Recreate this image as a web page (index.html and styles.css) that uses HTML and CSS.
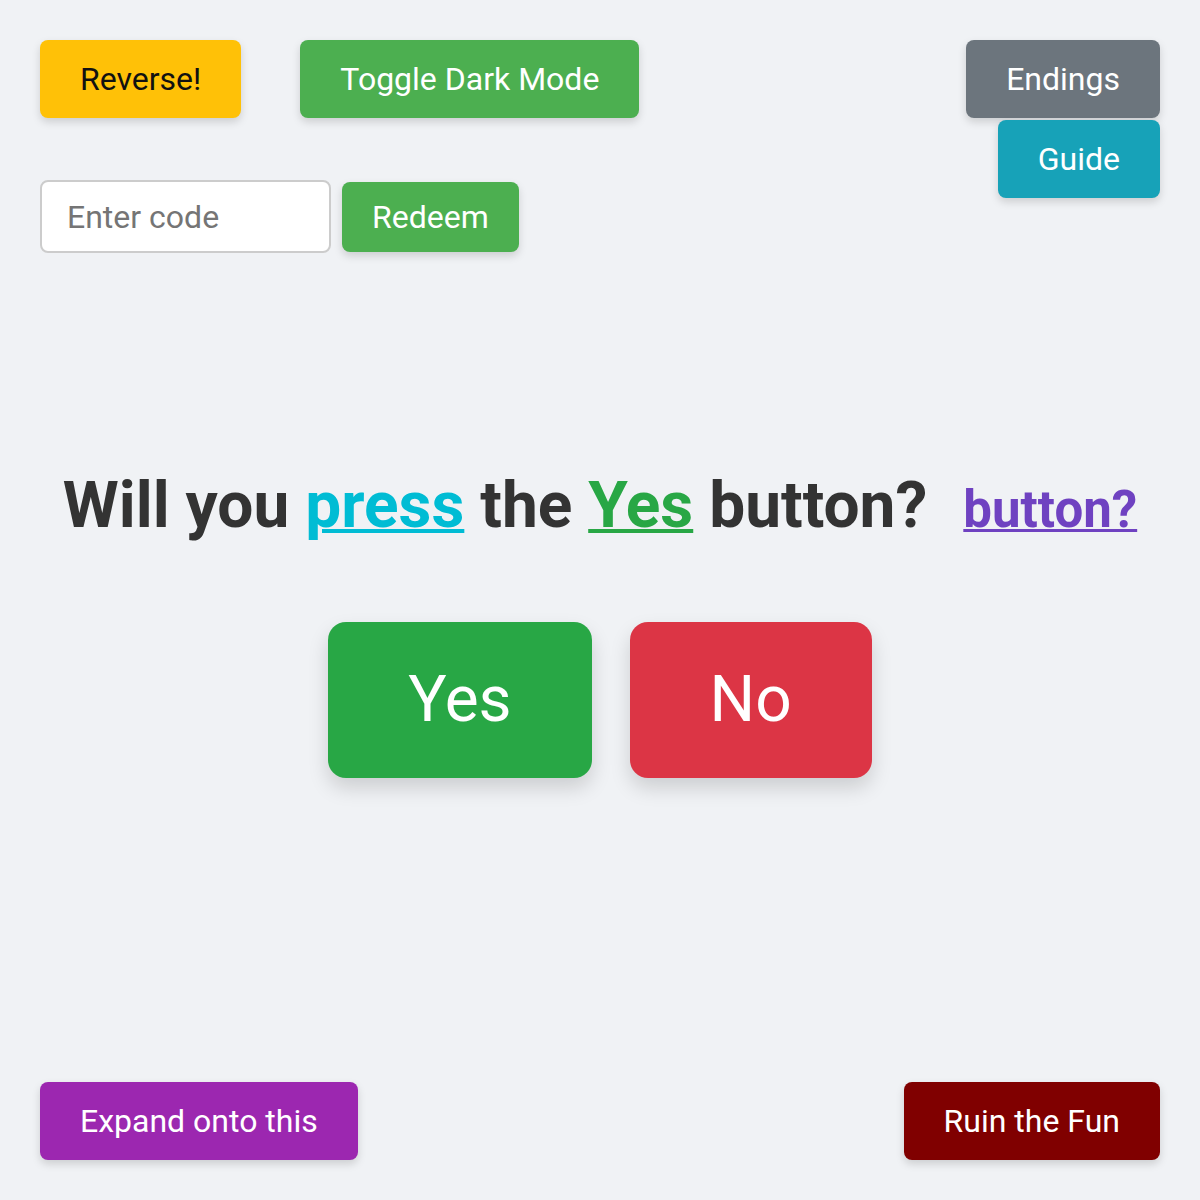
FILE: index.html
```html
<!DOCTYPE html>
<html lang="en">
<head>
  <meta charset="UTF-8">
  <meta name="viewport" content="width=device-width, initial-scale=1.0">
  <title>Will you press the Yes button?</title>
  <link rel="stylesheet" href="styles.css">
</head>
<body>
  <div class="page">
    <!-- Top controls -->
    <div class="top">
      <div class="top-left">
        <div class="row">
          <button class="btn btn-reverse">Reverse!</button>
          <button class="btn btn-dark-mode">Toggle Dark Mode</button>
        </div>
        <div class="code-row">
          <input class="code-input" type="text" placeholder="Enter code">
          <button class="btn btn-redeem">Redeem</button>
        </div>
      </div>
      <div class="top-right">
        <button class="btn btn-endings">Endings</button>
        <button class="btn btn-guide">Guide</button>
      </div>
    </div>

    <!-- Question -->
    <h1 class="question">
      Will you <a class="word-press">press</a> the <a class="word-yes">Yes</a> button?<a class="extra">button?</a>
    </h1>

    <div class="answers">
      <button class="answer answer-yes">Yes</button>
      <button class="answer answer-no">No</button>
    </div>

    <!-- Bottom controls -->
    <div class="bottom">
      <button class="btn btn-expand">Expand onto this</button>
      <button class="btn btn-ruin">Ruin the Fun</button>
    </div>
  </div>
</body>
</html>
```

FILE: styles.css
```css
* {
  box-sizing: border-box;
}

body {
  font-family: Roboto, 'Liberation Sans', sans-serif;
  margin: 0;
  padding: 40px;
  background-color: #f0f2f5;
  color: #333333;
}

.page {
  display: flex;
  flex-direction: column;
  min-height: 1120px;
}

/* Buttons */
.btn {
  font-family: inherit;
  font-size: 32px;
  line-height: 38px;
  padding: 20px 40px;
  border: none;
  border-radius: 8px;
  color: #ffffff;
  cursor: pointer;
  box-shadow: 0 4px 8px rgba(0, 0, 0, 0.15);
}

.btn-reverse {
  background-color: #ffc107;
  color: #111111;
}

.btn-dark-mode {
  background-color: #4caf50;
}

.btn-endings {
  background-color: #6c757d;
}

.btn-guide {
  background-color: #17a2b8;
}

.btn-redeem {
  background-color: #4caf50;
  padding: 16px 30px;
}

.btn-expand {
  background-color: #9c27b0;
}

.btn-ruin {
  background-color: #800000;
}

/* Top area */
.top {
  display: flex;
  justify-content: space-between;
  align-items: flex-start;
}

.row {
  display: flex;
  gap: 59px;
}

.code-row {
  display: flex;
  align-items: center;
  gap: 11px;
  margin-top: 62px;
}

.code-input {
  width: 291px;
  height: 73px;
  padding: 0 25px;
  font-family: inherit;
  font-size: 32px;
  color: #333333;
  background: #ffffff;
  border: 2px solid #cccccc;
  border-radius: 8px;
}

.code-input::placeholder {
  color: #757575;
}

.top-right {
  display: flex;
  flex-direction: column;
  align-items: flex-end;
  gap: 2px;
}

/* Question */
.question {
  margin: 215px 0 0;
  font-size: 64px;
  line-height: 76px;
  font-weight: 700;
  text-align: center;
  color: #333333;
}

.word-press {
  color: #00bcd4;
  text-decoration: underline;
  text-decoration-thickness: 4px;
}

.word-yes {
  color: #28a745;
  text-decoration: underline;
  text-decoration-thickness: 4px;
}

.extra {
  margin-left: 36px;
  font-size: 51px;
  color: #6f42c1;
  text-decoration: underline;
  text-decoration-thickness: 3px;
}

/* Yes / No */
.answers {
  display: flex;
  justify-content: center;
  gap: 38px;
  margin-top: 74px;
}

.answer {
  font-family: inherit;
  font-size: 64px;
  line-height: 76px;
  padding: 40px 80px;
  border: none;
  border-radius: 18px;
  color: #ffffff;
  cursor: pointer;
  box-shadow: 0 10px 20px rgba(0, 0, 0, 0.15);
}

.answer-yes {
  background-color: #28a745;
}

.answer-no {
  background-color: #dc3545;
}

/* Bottom area */
.bottom {
  display: flex;
  justify-content: space-between;
  margin-top: auto;
}
```
